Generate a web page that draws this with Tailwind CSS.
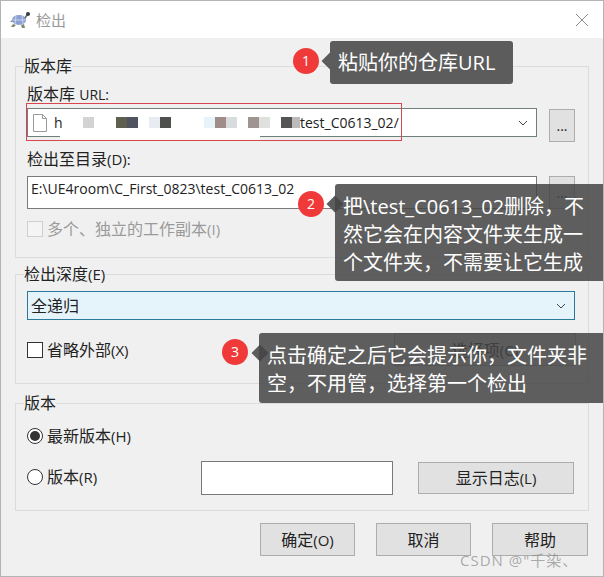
<!DOCTYPE html>
<html lang="zh-CN">
<head>
    <meta charset="UTF-8">
    <title>检出</title>
    <script src="https://cdn.jsdelivr.net/npm/@tailwindcss/browser@4"></script>
</head>
<body class="m-0 overflow-hidden">
<div class="relative flex h-[577px] w-[604px] flex-col overflow-hidden border border-[#b4b4b4] bg-[#f0f0f0] text-[16px] leading-[20px] text-[#222] font-['Open_Sans','Noto_Sans_CJK_SC',sans-serif]">

    <!-- title bar -->
    <header class="flex h-[37px] items-center justify-between bg-white pl-[9px] pr-[14px]">
        <div class="flex items-center gap-[5px]">
            <svg width="21" height="18" viewBox="0 0 21 18">
                <path d="M3 13l-2 3h3l2-2zM11 14l1 3h3l-1-4z" fill="#7f8a70"/>
                <path d="M2 9L0 11l3 0z" fill="#7f8a70"/>
                <ellipse cx="9" cy="9" rx="7" ry="5" fill="#8b9fd2"/>
                <path d="M3 9h12M6 5l-1 8M12 5l1 8" stroke="#c9d3ee" stroke-width="1" fill="none"/>
                <path d="M15 7l2-3" stroke="#666" stroke-width="1.5"/>
                <circle cx="18" cy="3" r="2" fill="#333a48"/>
            </svg>
            <span class="text-[15px] text-[#999]">检出</span>
        </div>
        <svg width="14" height="14" viewBox="0 0 14 14"><path d="M1 1l12 12M13 1L1 13" stroke="#8c8c8c" stroke-width="1" fill="none"/></svg>
    </header>

    <main class="flex flex-1 flex-col pl-[14px] pr-[14px] pt-[18px]">

        <fieldset class="border border-[#dcdcdc] px-[11px] pb-[20px]">
            <legend class="-ml-[3px]">版本库</legend>
            <p class="mt-[8px]">版本库 <span class="text-[14px] leading-none">URL:</span></p>
            <div class="mt-[4px] flex items-start gap-[12px]">
                <div class="flex h-[29px] w-[510px] items-center border border-[#6f7f7c] bg-white pl-[5px] pr-[8px] text-[14px]">
                    <svg width="14" height="18" viewBox="0 0 14 18"><path d="M.5.5h9l4 4v13H.5zM9.5.5v4h4" fill="#fff" stroke="#9a9a9a"/></svg>
                    <span class="ml-[7px] w-[29px]">h</span>
                    <div class="flex h-[11px]">
                        <i class="w-[11px] bg-[#d3d3d3]"></i><i class="w-[22px]"></i><i class="w-[11px] bg-[#5f5f50]"></i><i class="w-[11px] bg-[#4f5460]"></i><i class="w-[11px]"></i><i class="w-[11px] bg-[#e8ecf2]"></i><i class="w-[11px] bg-[#4e504e]"></i><i class="w-[33px]"></i><i class="w-[11px] bg-[#e7f3f8]"></i><i class="w-[11px] bg-[#a08c88]"></i><i class="w-[11px] bg-[#d8dcdc]"></i><i class="w-[11px]"></i><i class="w-[11px] bg-[#a09492]"></i><i class="w-[11px] bg-[#e0e0de]"></i><i class="w-[11px]"></i><i class="w-[11px] bg-[#555]"></i><i class="w-[8px] bg-[#bbb]"></i>
                    </div>
                    <span class="flex-1">test_C0613_02/</span>
                    <svg width="10" height="6" viewBox="0 0 10 6"><path d="M1 1l4 4 4-4" stroke="#444" fill="none"/></svg>
                </div>
                <button class="mt-[1px] h-[33px] w-[26px] border border-[#adadad] bg-[#e1e1e1] text-[14px] leading-none">...</button>
            </div>
            <p class="mt-[7px]">检出至目录<span class="text-[15px] leading-none">(D):</span></p>
            <div class="mt-[7px] flex items-start gap-[12px]">
                <div class="h-[33px] w-[510px] border border-[#7a7a7a] bg-white pl-[3px] pt-[2px] text-[14px]">E:\UE4room\C_First_0823\test_C0613_02</div>
                <button class="h-[33px] w-[26px] border border-[#adadad] bg-[#e1e1e1] text-[14px] leading-none">...</button>
            </div>
            <label class="mt-[12px] flex h-[16px] items-center gap-[4px] text-[#9a9a9a]">
                <span class="h-[16px] w-[16px] border border-[#cfcfcf] bg-[#f4f4f4]"></span><span>多个、独立的工作副本<span class="text-[15px] leading-none">(I)</span></span>
            </label>
        </fieldset>

        <fieldset class="mt-[6px] border border-[#dcdcdc] px-[11px] pb-[17px]">
            <legend class="-ml-[3px]">检出深度<span class="text-[15px] leading-none">(E)</span></legend>
            <div class="mt-[7px] flex h-[29px] w-[548px] items-center justify-between border border-[#2b7a9b] bg-[#e5f3fb] pl-[3px] pr-[8px]">
                <span>全递归</span>
                <svg width="10" height="6" viewBox="0 0 10 6"><path d="M1 1l4 4 4-4" stroke="#444" fill="none"/></svg>
            </div>
            <div class="mt-[13px] flex h-[33px] items-center justify-between">
                <label class="flex items-center gap-[4px]">
                    <span class="h-[16px] w-[16px] border border-[#333] bg-white"></span><span>省略外部<span class="text-[15px] leading-none">(X)</span></span>
                </label>
                <button class="mr-[1px] h-[33px] w-[182px] border border-[#adadad] bg-[#e1e1e1]">选择项<span class="text-[15px] leading-none">(C)</span></button>
            </div>
        </fieldset>

        <fieldset class="mt-[9px] border border-[#dcdcdc] px-[11px] pb-[15px]">
            <legend class="-ml-[3px]">版本</legend>
            <label class="mt-[15px] flex h-[16px] items-center gap-[4px]">
                <span class="flex h-[16px] w-[16px] items-center justify-center rounded-full border border-[#333] bg-white"><span class="h-[10px] w-[10px] rounded-full bg-[#333]"></span></span><span>最新版本<span class="text-[15px] leading-none">(H)</span></span>
            </label>
            <div class="mt-[17px] flex items-start">
                <label class="mt-[6px] flex w-[174px] items-center gap-[4px]">
                    <span class="h-[16px] w-[16px] rounded-full border border-[#333] bg-white"></span><span>版本<span class="text-[15px] leading-none">(R)</span></span>
                </label>
                <div class="h-[34px] w-[192px] border border-[#7a7a7a] bg-white"></div>
                <button class="ml-[25px] mt-[1px] h-[32px] w-[156px] border border-[#adadad] bg-[#e1e1e1]">显示日志<span class="text-[15px] leading-none">(L)</span></button>
            </div>
        </fieldset>

        <div class="mt-[12px] flex justify-end gap-[21px] pr-[1px]">
            <button class="h-[33px] w-[95px] border border-[#adadad] bg-[#e1e1e1]">确定<span class="text-[15px] leading-none">(O)</span></button>
            <button class="h-[33px] w-[95px] border border-[#adadad] bg-[#e1e1e1]">取消</button>
            <button class="h-[33px] w-[96px] border border-[#adadad] bg-[#e1e1e1]">帮助</button>
        </div>
    </main>

    <!-- annotations on top of the dialog -->
    <div class="absolute left-[25px] top-[102px] h-[38px] w-[376px] border border-[#d8474f]"></div>
    <div class="absolute left-[59px] top-[134px] h-[5px] w-[200px] bg-white"></div>

    <div class="absolute left-[292px] top-[47px] flex h-[26px] w-[26px] items-center justify-center rounded-full bg-[#f03a3a] text-[14px] text-white">1</div>
    <div class="absolute left-[323px] top-[54px] h-[12px] w-[12px] rotate-45 bg-[#5c5c5c]"></div>
    <div class="absolute left-[329px] top-[40px] flex h-[43px] w-[183px] items-center rounded-[3px] bg-[#5c5c5c] pl-[8px] text-[20px] text-white">粘贴你的仓库URL</div>

    <div class="absolute left-[297px] top-[190px] flex h-[26px] w-[26px] items-center justify-center rounded-full bg-[#f03a3a] text-[14px] text-white">2</div>
    <div class="absolute left-[328px] top-[197px] h-[12px] w-[12px] rotate-45 bg-[#5c5c5c]"></div>
    <div class="absolute left-[334px] top-[183px] h-[97px] w-[270px] rounded-[3px] bg-[#444]/85 pl-[8px] pt-[9px] text-[20px] leading-[28px] text-white">把\test_C0613_02删除，不<br>然它会在内容文件夹生成一<br>个文件夹，不需要让它生成</div>

    <div class="absolute left-[221px] top-[338px] flex h-[26px] w-[26px] items-center justify-center rounded-full bg-[#f03a3a] text-[14px] text-white">3</div>
    <div class="absolute left-[253px] top-[346px] h-[12px] w-[12px] rotate-45 bg-[#5c5c5c]"></div>
    <div class="absolute left-[258px] top-[332px] h-[70px] w-[346px] rounded-[3px] bg-[#444]/85 pl-[8px] pt-[9px] text-[20px] leading-[28px] text-white">点击确定之后它会提示你，文件夹非<br>空，不用管，选择第一个检出</div>

    <div class="absolute left-[459px] top-[549px] text-[15px] tracking-[1px] text-[#8a8a8a]/70">CSDN @"千染、</div>
</div>
</body>
</html>
